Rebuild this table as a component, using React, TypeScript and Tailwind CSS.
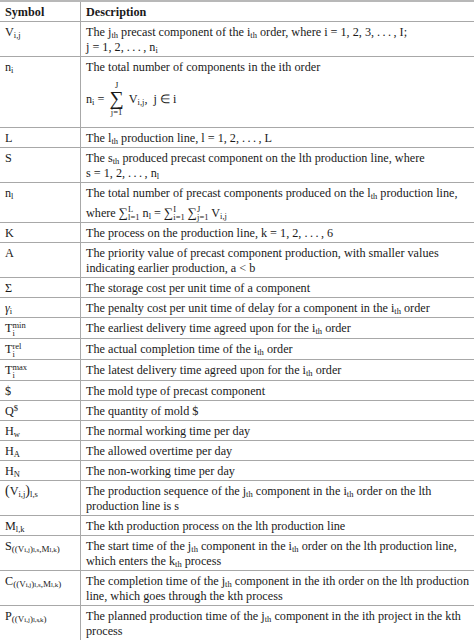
import React from "react";

const S = ({ children }: { children: React.ReactNode }) => (
  <sub className="text-[8.5px]">{children}</sub>
);

const Stack = ({ sup, sub }: { sup: React.ReactNode; sub: React.ReactNode }) => (
  <span className="inline-flex flex-col align-top text-[8.5px] leading-[8px]">
    <span>{sup}</span>
    <span>{sub}</span>
  </span>
);

const InlineSum = ({ lo, hi }: { lo: React.ReactNode; hi: React.ReactNode }) => (
  <span>
    <span className="text-[13px]">∑</span>
    <span className="inline-flex flex-col align-top text-[8.5px] leading-[7.5px] pt-[1px]">
      <span>{hi}</span>
      <span>{lo}</span>
    </span>
  </span>
);

const Nested = ({ head, tail }: { head: string; tail: React.ReactNode }) => (
  <>
    {head}
    <sub className="text-[9px]">
      ((V<span className="text-[7px]">i,j</span>)<span className="text-[7px]">l,s</span>
      {tail})
    </sub>
  </>
);

type Row = { sym: React.ReactNode; desc: React.ReactNode };

const rows: Row[] = [
  {
    sym: (
      <>
        V<S>i,j</S>
      </>
    ),
    desc: (
      <>
        The j<S>th</S> precast component of the i<S>th</S> order, where i = 1, 2, 3, .&thinsp;.&thinsp;.&thinsp;, I;
        <br />j = 1, 2, .&thinsp;.&thinsp;.&thinsp;, n<S>i</S>
      </>
    ),
  },
  {
    sym: (
      <>
        n<S>i</S>
      </>
    ),
    desc: (
      <div className="flex flex-col h-[66px]">
        <span>The total number of components in the ith order</span>
        <div className="flex items-center mt-[6px]">
          <span>
            n<S>i</S> =&nbsp;
          </span>
          <span className="flex flex-col items-center mx-[2px]">
            <span className="text-[8.5px] leading-[9px]">J</span>
            <span className="text-[20px] leading-[17px]">∑</span>
            <span className="text-[8.5px] leading-[10px]">j=1</span>
          </span>
          <span>
            &nbsp;V<S>i,j</S>,&nbsp; j ∈ i
          </span>
        </div>
      </div>
    ),
  },
  {
    sym: "L",
    desc: (
      <>
        The l<S>th</S> production line, l = 1, 2, .&thinsp;.&thinsp;.&thinsp;, L
      </>
    ),
  },
  {
    sym: "S",
    desc: (
      <>
        The s<S>th</S> produced precast component on the lth production line, where
        <br />s = 1, 2, .&thinsp;.&thinsp;.&thinsp;, n<S>l</S>
      </>
    ),
  },
  {
    sym: (
      <>
        n<S>l</S>
      </>
    ),
    desc: (
      <>
        The total number of precast components produced on the l<S>th</S> production line,
        <br />
        <span className="inline-block pt-[4px]">
          where <InlineSum hi="L" lo="l=1" /> n<S>l</S> = <InlineSum hi="I" lo="i=1" />{" "}
          <InlineSum hi="J" lo="j=1" /> V<S>i,j</S>
        </span>
      </>
    ),
  },
  {
    sym: "K",
    desc: <>The process on the production line, k = 1, 2, .&thinsp;.&thinsp;.&thinsp;, 6</>,
  },
  {
    sym: "A",
    desc: (
      <>
        The priority value of precast component production, with smaller values
        <br />
        indicating earlier production, a &lt; b
      </>
    ),
  },
  { sym: "Σ", desc: "The storage cost per unit time of a component" },
  {
    sym: (
      <>
        <span className="italic">γ</span>
        <S>i</S>
      </>
    ),
    desc: (
      <>
        The penalty cost per unit time of delay for a component in the i<S>th</S> order
      </>
    ),
  },
  {
    sym: (
      <>
        T<Stack sup="min" sub="i" />
      </>
    ),
    desc: (
      <>
        The earliest delivery time agreed upon for the i<S>th</S> order
      </>
    ),
  },
  {
    sym: (
      <>
        T<Stack sup="rel" sub="i" />
      </>
    ),
    desc: (
      <>
        The actual completion time of the i<S>th</S> order
      </>
    ),
  },
  {
    sym: (
      <>
        T<Stack sup="max" sub="i" />
      </>
    ),
    desc: (
      <>
        The latest delivery time agreed upon for the i<S>th</S> order
      </>
    ),
  },
  { sym: "$", desc: "The mold type of precast component" },
  {
    sym: (
      <>
        Q<sup className="text-[8.5px]">$</sup>
      </>
    ),
    desc: "The quantity of mold $",
  },
  {
    sym: (
      <>
        H<S>w</S>
      </>
    ),
    desc: "The normal working time per day",
  },
  {
    sym: (
      <>
        H<S>A</S>
      </>
    ),
    desc: "The allowed overtime per day",
  },
  {
    sym: (
      <>
        H<S>N</S>
      </>
    ),
    desc: "The non-working time per day",
  },
  {
    sym: (
      <>
        <span className="text-[14px] leading-[0]">(</span>V<S>i,j</S>
        <span className="text-[14px] leading-[0]">)</span>
        <S>l,s</S>
      </>
    ),
    desc: (
      <>
        The production sequence of the j<S>th</S> component in the i<S>th</S> order on the lth
        <br />
        production line is s
      </>
    ),
  },
  {
    sym: (
      <>
        M<S>l,k</S>
      </>
    ),
    desc: "The kth production process on the lth production line",
  },
  {
    sym: (
      <Nested
        head="S"
        tail={
          <>
            ,M<span className="text-[7px]">l,k</span>
          </>
        }
      />
    ),
    desc: (
      <>
        The start time of the j<S>th</S> component in the i<S>th</S> order on the lth production line,
        <br />
        which enters the k<S>th</S> process
      </>
    ),
  },
  {
    sym: (
      <Nested
        head="C"
        tail={
          <>
            ,M<span className="text-[7px]">l,k</span>
          </>
        }
      />
    ),
    desc: (
      <>
        The completion time of the j<S>th</S> component in the ith order on the lth production
        <br />
        line, which goes through the kth process
      </>
    ),
  },
  {
    sym: <Nested head="P" tail={<span className="text-[7px] -ml-[1px]">,k</span>} />,
    desc: (
      <>
        The planned production time of the j<S>th</S> component in the ith project in the kth
        <br />
        process
      </>
    ),
  },
];

export default function App() {
  return (
    <div
      className="w-[474px] h-[640px] bg-white text-[#1a1a1a] text-[12.2px] leading-[15px] overflow-hidden"
      style={{ fontFamily: '"Liberation Serif", "Times New Roman", serif' }}
    >
      <div className="border-t-[2px] border-[#b8b8b8] border-b-[4px]">
        <div className="flex border-b border-[#a8a8a8] font-bold">
          <div className="w-[81px] shrink-0 border-r border-[#a8a8a8] pl-[5px] pt-[3px] pb-[1px]">
            Symbol
          </div>
          <div className="flex-1 pl-[5px] pt-[3px] pb-[1px]">Description</div>
        </div>
        {rows.map((r, i) => (
          <div key={i} className="flex border-b border-[#a8a8a8]">
            <div className="w-[81px] shrink-0 border-r border-[#a8a8a8] pl-[5px] pt-[3px] pb-[1px] whitespace-nowrap">
              {r.sym}
            </div>
            <div className="flex-1 pl-[5px] pt-[3px] pb-[1px] whitespace-nowrap">{r.desc}</div>
          </div>
        ))}
      </div>
    </div>
  );
}
